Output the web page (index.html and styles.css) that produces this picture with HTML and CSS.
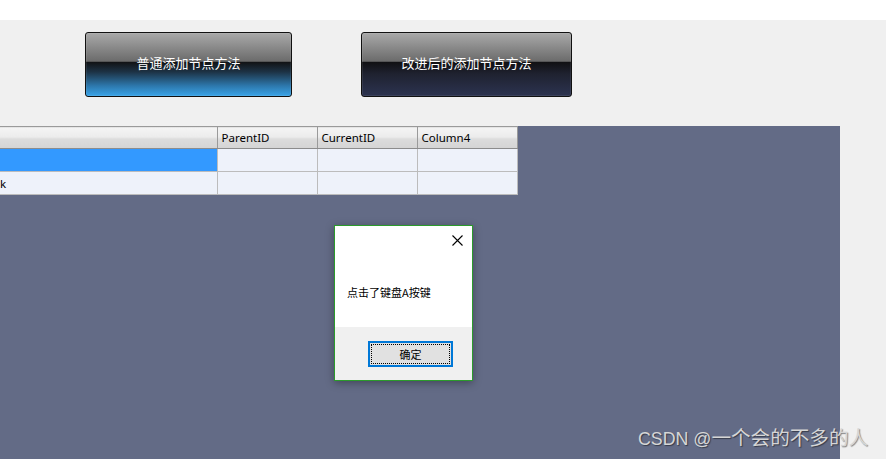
FILE: index.html
```html
<!DOCTYPE html>
<html>
<head>
<meta charset="utf-8">
<link rel="stylesheet" href="styles.css">
</head>
<body>
<div class="topband"></div>
<div class="toolbar">
  <button class="gbtn blue">普通添加节点方法</button>
  <button class="gbtn dark">改进后的添加节点方法</button>
</div>
<div class="stage">
  <div class="main">
    <table class="grid">
      <tr class="head">
        <th class="c0"></th>
        <th class="c1">ParentID</th>
        <th class="c1">CurrentID</th>
        <th class="c1">Column4</th>
      </tr>
      <tr>
        <td class="c0 sel"></td><td></td><td></td><td></td>
      </tr>
      <tr>
        <td class="c0">k</td><td></td><td></td><td></td>
      </tr>
    </table>
    <div class="dialog">
      <div class="dlg-top">
        <div class="close">
          <svg width="11" height="11" viewBox="0 0 11 11"><path d="M0.5 0.5 L10.5 10.5 M10.5 0.5 L0.5 10.5" stroke="#000" stroke-width="1.1" fill="none"/></svg>
        </div>
        <div class="msg">点击了键盘A按键</div>
      </div>
      <div class="dlg-bottom">
        <button class="ok"><span class="focus">确定</span></button>
      </div>
    </div>
  </div>
  <div class="side"></div>
  <div class="watermark">CSDN @<span class="wm-cjk">一个会的不多的人</span></div>
</div>
</body>
</html>
```
FILE: styles.css
```css
html, body {
  margin: 0;
  padding: 0;
}
body {
  width: 886px;
  height: 459px;
  overflow: hidden;
  background: #f0f0f0;
  font-family: "Noto Sans", "Noto Sans CJK SC", sans-serif;
}
.topband {
  height: 20px;
  background: #ffffff;
}
.toolbar {
  height: 106px;
  box-sizing: border-box;
  padding: 12px 0 0 85px;
  display: flex;
  align-items: flex-start;
  gap: 69px;
}
.gbtn {
  height: 65px;
  border: 1px solid #111;
  border-radius: 3px;
  color: #fff;
  font-family: "Noto Sans CJK SC", sans-serif;
  font-size: 13px;
  padding: 0 0 5px 0;
  margin: 0;
  box-shadow: inset 0 0 0 1px rgba(255,255,255,0.08);
}
.gbtn.blue {
  width: 207px;
  background: linear-gradient(to bottom, #a9a9a9 0%, #6b6b6b 45%, #111214 46%, #1d3346 62%, #2d78ad 84%, #3aa4e8 100%);
}
.gbtn.dark {
  width: 211px;
  background: linear-gradient(to bottom, #a9a9a9 0%, #6b6b6b 45%, #101012 46%, #1f2230 65%, #2c3350 100%);
}
.stage {
  position: relative;
  height: 333px;
  display: flex;
}
.main {
  position: relative;
  width: 840px;
  height: 333px;
  background: #636b86;
}
.side {
  flex: 1;
  background: #f0f0f0;
}
.grid {
  border-collapse: collapse;
  font-size: 11.5px;
  color: #000;
}
.grid th, .grid td {
  padding: 0 0 0 4px;
  text-align: left;
  font-weight: normal;
  box-sizing: border-box;
}
.grid .c0 {
  width: 217px;
  padding-left: 0;
}
.grid .c1 {
  width: 100px;
}
.grid tr.head th {
  height: 22px;
  background: linear-gradient(to bottom, #f4f4f4 0%, #ececec 45%, #dcdcdc 55%, #d4d4d4 100%);
  border-top: 1px solid #9a9a9a;
  border-bottom: 1px solid #8c8c8c;
  border-right: 1px solid #9a9a9a;
  border-left: 1px solid #9a9a9a;
}
.grid tr.head th.c0 {
  border-left: none;
}
.grid td {
  height: 23px;
  background: #eef2fa;
  border-right: 1px solid #bcbcbc;
  border-left: 1px solid #bcbcbc;
  border-bottom: 1px solid #bcbcbc;
}
.grid td.c0 {
  border-left: none;
}
.grid td.sel {
  background: #3399ff;
}
.dialog {
  position: absolute;
  left: 334px;
  top: 99px;
  width: 139px;
  height: 156px;
  box-sizing: border-box;
  border: 1px solid #2b9a2b;
  background: #f0f0f0;
  box-shadow: 0 2px 8px rgba(0,0,0,0.35);
  display: flex;
  flex-direction: column;
}
.dlg-top {
  position: relative;
  height: 101px;
  background: #fff;
}
.close {
  position: absolute;
  right: 9px;
  top: 9px;
  width: 11px;
  height: 11px;
}
.close svg {
  display: block;
}
.msg {
  padding: 58px 0 0 12px;
  font-family: "Noto Sans CJK SC", sans-serif;
  font-size: 11px;
  line-height: 16px;
  color: #000;
}
.dlg-bottom {
  flex: 1;
  display: flex;
  justify-content: flex-end;
  padding: 14px 19px 0 0;
}
.ok {
  width: 85px;
  height: 26px;
  margin: 0;
  padding: 0;
  border: 2px solid #0078d7;
  background: #e1e1e1;
  display: flex;
  box-sizing: border-box;
}
.ok .focus {
  flex: 1;
  margin: 1px;
  border: 1px dotted #000;
  font-family: "Noto Sans CJK SC", sans-serif;
  font-size: 11px;
  line-height: 18px;
  color: #000;
  text-align: center;
}
.watermark {
  position: absolute;
  left: 638px;
  top: 299px;
  font-family: "Liberation Sans", "Noto Sans CJK SC", sans-serif;
  font-size: 17.8px;
  line-height: 24px;
  color: #d6d6d6;
  text-shadow: 1px 1px 1px rgba(0,0,0,0.45);
  white-space: nowrap;
}
.wm-cjk {
  font-family: "Noto Sans CJK SC", sans-serif;
  font-size: 19.6px;
}
```
